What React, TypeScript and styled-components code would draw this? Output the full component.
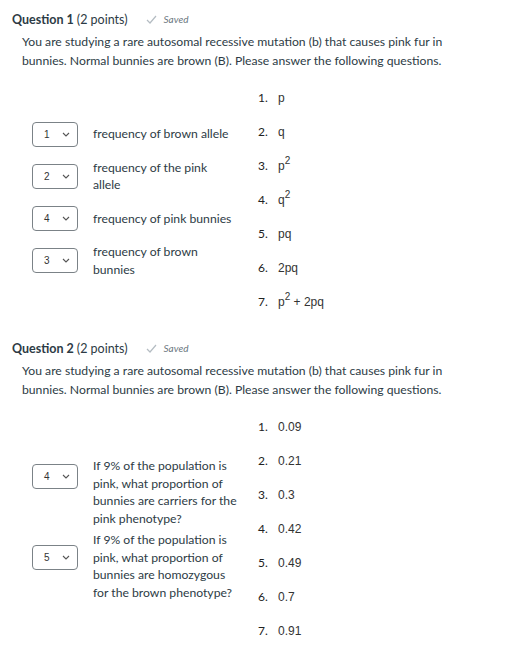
import styled, { createGlobalStyle } from "styled-components";

const GlobalStyle = createGlobalStyle`
  body {
    margin: 0;
    background: #ffffff;
    font-family: Lato, "Open Sans", sans-serif;
    color: #2d3b45;
  }
`;

type Row = { value: string; label: string; offset?: number };

const questions: {
  title: string;
  rows: Row[];
  answers: (string | [string, string])[];
  rowGap: number;
}[] = [
  {
    title: "Question 1",
    rowGap: 12,
    rows: [
      { value: "1", label: "frequency of brown allele" },
      { value: "2", label: "frequency of the pink allele" },
      { value: "4", label: "frequency of pink bunnies" },
      { value: "3", label: "frequency of brown bunnies" },
    ],
    answers: ["p", "q", ["p", ""], ["q", ""], "pq", "2pq", ["p", " + 2pq"]],
  },
  {
    title: "Question 2",
    rowGap: 3,
    rows: [
      {
        value: "4",
        label:
          "If 9% of the population is pink, what proportion of bunnies are carriers for the pink phenotype?",
        offset: 7,
      },
      {
        value: "5",
        label:
          "If 9% of the population is pink, what proportion of bunnies are homozygous for the brown phenotype?",
        offset: 14,
      },
    ],
    answers: ["0.09", "0.21", "0.3", "0.42", "0.49", "0.7", "0.91"],
  },
];

const intro =
  "You are studying a rare autosomal recessive mutation (b) that causes pink fur in bunnies. Normal bunnies are brown (B). Please answer the following questions.";

export default function App() {
  return (
    <>
      <GlobalStyle />
      <Page>
        {questions.map((q) => (
          <Question key={q.title}>
            <Header>
              <Title>{q.title}</Title>
              <Points>(2 points)</Points>
              <Saved>
                <svg width="11" height="9" viewBox="0 0 11 9">
                  <path
                    d="M1 5 L4 8 L10 1"
                    fill="none"
                    stroke="#b4bcc2"
                    strokeWidth="1.2"
                  />
                </svg>
                <span>Saved</span>
              </Saved>
            </Header>
            <Prompt>{intro}</Prompt>
            <Matching>
              <Pairs $gap={q.rowGap}>
                {q.rows.map((r) => (
                  <PairRow key={r.label} $offset={r.offset}>
                    <Select>
                      <span>{r.value}</span>
                      <svg width="8" height="5" viewBox="0 0 8 5">
                        <path
                          d="M1 1 L4 4 L7 1"
                          fill="none"
                          stroke="#555"
                          strokeWidth="1.1"
                        />
                      </svg>
                    </Select>
                    <Label>{r.label}</Label>
                  </PairRow>
                ))}
              </Pairs>
              <Answers>
                {q.answers.map((a, i) => (
                  <Answer key={i}>
                    <Num>{i + 1}.</Num>
                    {typeof a === "string" ? (
                      <span>{a}</span>
                    ) : (
                      <span>
                        {a[0]}
                        <sup>2</sup>
                        {a[1]}
                      </span>
                    )}
                  </Answer>
                ))}
              </Answers>
            </Matching>
          </Question>
        ))}
      </Page>
    </>
  );
}

const Page = styled.div`
  width: 517px;
  padding: 10px 0 0 12px;
  box-sizing: border-box;
`;

const Question = styled.section`
  margin-bottom: 28px;
`;

const Header = styled.div`
  display: flex;
  align-items: baseline;
  height: 18px;
  line-height: 18px;
`;

const Title = styled.span`
  font-size: 12.5px;
  font-weight: 700;
  color: #2d3b45;
`;

const Points = styled.span`
  font-size: 12.5px;
  margin-left: 3px;
`;

const Saved = styled.span`
  display: inline-flex;
  align-items: center;
  gap: 7px;
  margin-left: 18px;
  font-size: 10px;
  font-style: italic;
  color: #6b7780;
`;

const Prompt = styled.p`
  margin: 5px 0 0 10px;
  width: 430px;
  font-size: 12.2px;
  line-height: 18.6px;
`;

const Matching = styled.div`
  display: flex;
  align-items: center;
  margin-top: 19px;
  padding-left: 20px;
`;

const Pairs = styled.div<{ $gap: number }>`
  width: 226px;
  display: flex;
  flex-direction: column;
  gap: ${(p) => p.$gap}px;
`;

const PairRow = styled.div<{ $offset?: number }>`
  display: flex;
  align-items: ${(p) => (p.$offset === undefined ? "center" : "flex-start")};
  gap: 15px;

  & > div:first-child {
    margin-top: ${(p) => p.$offset ?? 0}px;
  }
`;

const Select = styled.div`
  flex: none;
  width: 46px;
  height: 25px;
  box-sizing: border-box;
  border: 1px solid #7b8287;
  border-radius: 4px;
  display: flex;
  align-items: center;
  justify-content: space-between;
  padding: 0 7px 0 11px;
  font-family: "Liberation Sans", Arial, sans-serif;
  font-size: 10px;
  color: #333;
`;

const Label = styled.div`
  width: 144.5px;
  font-size: 12.2px;
  line-height: 17.7px;
`;

const Answers = styled.ol`
  list-style: none;
  margin: 0;
  padding: 0;
  display: flex;
  flex-direction: column;
  gap: 16px;
`;

const Answer = styled.li`
  display: flex;
  height: 18px;
  line-height: 18px;
  font-family: "Liberation Sans", Arial, sans-serif;
  font-size: 12px;
  color: #333;

  sup {
    font-size: 10px;
    line-height: 0;
    vertical-align: 6px;
  }
`;

const Num = styled.span`
  width: 20px;
  font-family: Lato, sans-serif;
  color: #222;
`;
